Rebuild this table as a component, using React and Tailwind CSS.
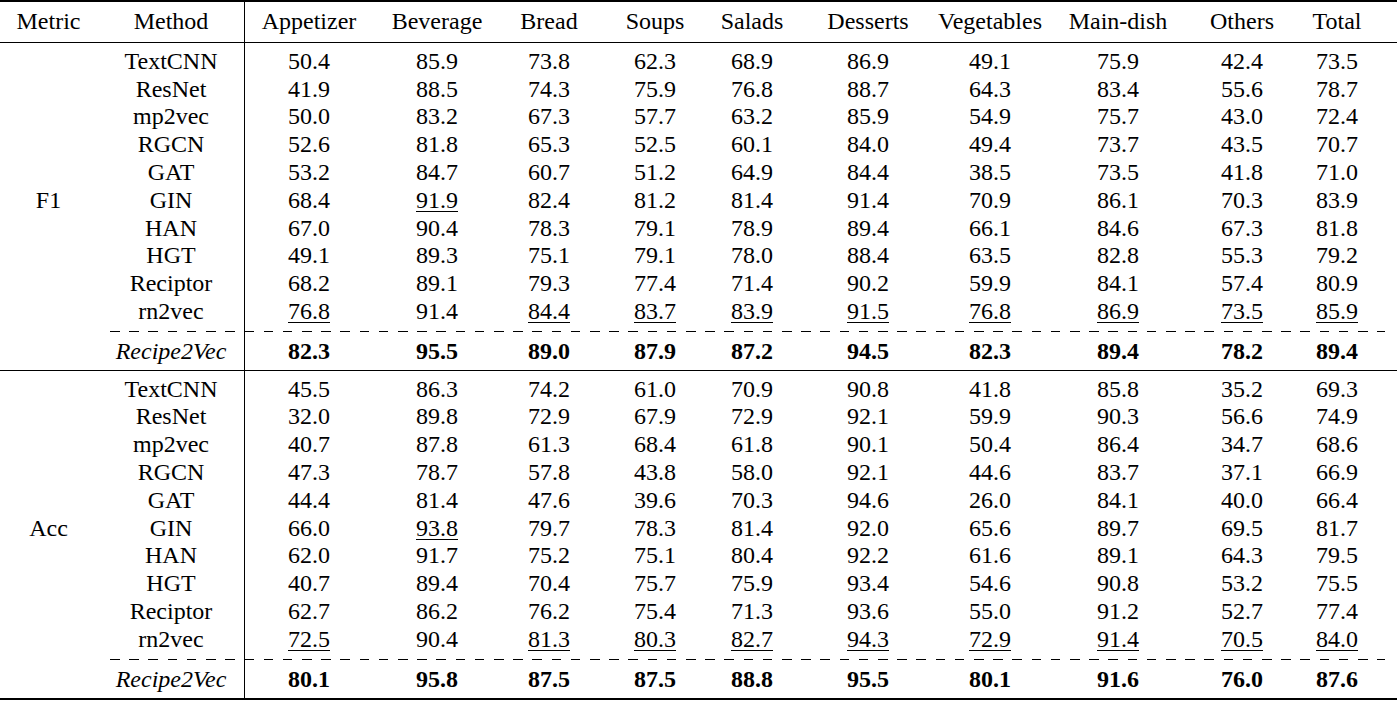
import React from "react";

const COLS =
  "grid grid-cols-[97px_148px_128px_128px_96px_116px_78px_154px_90px_166px_82px_108px]";

const HEAD = [
  "Metric",
  "Method",
  "Appetizer",
  "Beverage",
  "Bread",
  "Soups",
  "Salads",
  "Desserts",
  "Vegetables",
  "Main-dish",
  "Others",
  "Total",
];

const F1 = [
  ["TextCNN", "50.4", "85.9", "73.8", "62.3", "68.9", "86.9", "49.1", "75.9", "42.4", "73.5"],
  ["ResNet", "41.9", "88.5", "74.3", "75.9", "76.8", "88.7", "64.3", "83.4", "55.6", "78.7"],
  ["mp2vec", "50.0", "83.2", "67.3", "57.7", "63.2", "85.9", "54.9", "75.7", "43.0", "72.4"],
  ["RGCN", "52.6", "81.8", "65.3", "52.5", "60.1", "84.0", "49.4", "73.7", "43.5", "70.7"],
  ["GAT", "53.2", "84.7", "60.7", "51.2", "64.9", "84.4", "38.5", "73.5", "41.8", "71.0"],
  ["GIN", "68.4", "_91.9", "82.4", "81.2", "81.4", "91.4", "70.9", "86.1", "70.3", "83.9"],
  ["HAN", "67.0", "90.4", "78.3", "79.1", "78.9", "89.4", "66.1", "84.6", "67.3", "81.8"],
  ["HGT", "49.1", "89.3", "75.1", "79.1", "78.0", "88.4", "63.5", "82.8", "55.3", "79.2"],
  ["Reciptor", "68.2", "89.1", "79.3", "77.4", "71.4", "90.2", "59.9", "84.1", "57.4", "80.9"],
  ["rn2vec", "_76.8", "91.4", "_84.4", "_83.7", "_83.9", "_91.5", "_76.8", "_86.9", "_73.5", "_85.9"],
];
const F1_BEST = ["82.3", "95.5", "89.0", "87.9", "87.2", "94.5", "82.3", "89.4", "78.2", "89.4"];

const ACC = [
  ["TextCNN", "45.5", "86.3", "74.2", "61.0", "70.9", "90.8", "41.8", "85.8", "35.2", "69.3"],
  ["ResNet", "32.0", "89.8", "72.9", "67.9", "72.9", "92.1", "59.9", "90.3", "56.6", "74.9"],
  ["mp2vec", "40.7", "87.8", "61.3", "68.4", "61.8", "90.1", "50.4", "86.4", "34.7", "68.6"],
  ["RGCN", "47.3", "78.7", "57.8", "43.8", "58.0", "92.1", "44.6", "83.7", "37.1", "66.9"],
  ["GAT", "44.4", "81.4", "47.6", "39.6", "70.3", "94.6", "26.0", "84.1", "40.0", "66.4"],
  ["GIN", "66.0", "_93.8", "79.7", "78.3", "81.4", "92.0", "65.6", "89.7", "69.5", "81.7"],
  ["HAN", "62.0", "91.7", "75.2", "75.1", "80.4", "92.2", "61.6", "89.1", "64.3", "79.5"],
  ["HGT", "40.7", "89.4", "70.4", "75.7", "75.9", "93.4", "54.6", "90.8", "53.2", "75.5"],
  ["Reciptor", "62.7", "86.2", "76.2", "75.4", "71.3", "93.6", "55.0", "91.2", "52.7", "77.4"],
  ["rn2vec", "_72.5", "90.4", "_81.3", "_80.3", "_82.7", "_94.3", "_72.9", "_91.4", "_70.5", "_84.0"],
];
const ACC_BEST = ["80.1", "95.8", "87.5", "87.5", "88.8", "95.5", "80.1", "91.6", "76.0", "87.6"];

function Cell({ children, className = "" }) {
  return (
    <div className={"flex items-center justify-center whitespace-nowrap " + className}>
      {children}
    </div>
  );
}

function Value({ v }) {
  if (v.startsWith("_")) {
    return (
      <span className="underline decoration-1 underline-offset-[3px]">{v.slice(1)}</span>
    );
  }
  return <span>{v}</span>;
}

function Dashed() {
  return (
    <div className="pl-[110px] py-[5.5px]">
      <div className="h-px w-[1275px] bg-[repeating-linear-gradient(to_right,#000_0px,#000_9.6px,transparent_9.6px,transparent_19.2px)]" />
    </div>
  );
}

function Section({ label, rows, best }) {
  return (
    <div className="pt-[4.8px] pb-[4.2px]">
      {rows.map((r, i) => (
        <div key={i} className={COLS + " h-[27.8px]"}>
          <Cell>{i === 5 ? label : ""}</Cell>
          <Cell>{r[0]}</Cell>
          {r.slice(1).map((v, j) => (
            <Cell key={j}>
              <Value v={v} />
            </Cell>
          ))}
        </div>
      ))}
      <Dashed />
      <div className={COLS + " h-[27.8px]"}>
        <Cell />
        <Cell className="italic">Recipe2Vec</Cell>
        {best.map((v, j) => (
          <Cell key={j} className="font-bold">
            {v}
          </Cell>
        ))}
      </div>
    </div>
  );
}

export default function App() {
  return (
    <div className="w-[1397px] h-[704px] bg-white text-black font-serif text-[24px] leading-[27.8px]">
      <div className="font-[Liberation_Serif,serif]">
        <div className="h-[2px] bg-black" />
        <div className="bg-[linear-gradient(#000,#000)] bg-no-repeat bg-size-[1px_100%] bg-position-[244px_0px]">
          <div className={COLS + " h-[40px]"}>
            {HEAD.map((h) => (
              <Cell key={h}>{h}</Cell>
            ))}
          </div>
          <div className="h-px bg-black" />
          <Section label="F1" rows={F1} best={F1_BEST} />
          <div className="h-px bg-black" />
          <Section label="Acc" rows={ACC} best={ACC_BEST} />
        </div>
        <div className="h-[2px] bg-black" />
      </div>
    </div>
  );
}
